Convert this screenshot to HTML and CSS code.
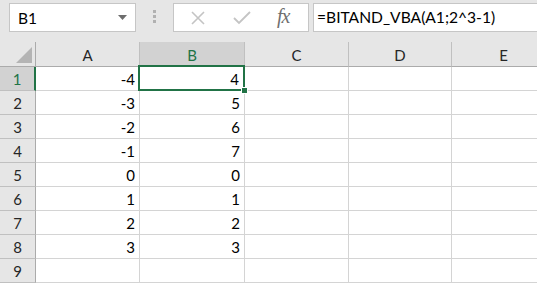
FILE: index.html
```html
<!DOCTYPE html>
<html lang="en">
<head>
    <meta charset="UTF-8">
    <meta name="viewport" content="width=device-width, initial-scale=1.0">
    <title>BITAND_VBA</title>
    <link rel="stylesheet" href="styles.css">
</head>
<body>
    <div class="toolbar">
        <div class="name-box">
            <span>B1</span>
            <svg class="drop" width="9" height="5" viewBox="0 0 9 5"><path d="M0 0h9L4.5 5z" fill="#6d6d6d"/></svg>
        </div>
        <div class="grip"><i></i><i></i><i></i></div>
        <div class="buttons">
            <svg width="14" height="14" viewBox="0 0 14 14"><path d="M1 1l12 12M13 1L1 13" stroke="#c4c4c4" stroke-width="1.6" fill="none"/></svg>
            <svg width="18" height="14" viewBox="0 0 18 14"><path d="M1 7l5 5L17 1" stroke="#c4c4c4" stroke-width="1.8" fill="none"/></svg>
            <span class="fx">fx</span>
        </div>
        <div class="formula">=BITAND_VBA(A1;2^3-1)</div>
    </div>

    <div class="sheet">
        <div class="corner"><span></span></div>
        <div class="col">A</div>
        <div class="col sel">B</div>
        <div class="col">C</div>
        <div class="col">D</div>
        <div class="col">E</div>

        <div class="row sel">1</div><div class="cell">-4</div><div class="cell active">4</div><div class="cell"></div><div class="cell"></div><div class="cell"></div>
        <div class="row">2</div><div class="cell">-3</div><div class="cell">5</div><div class="cell"></div><div class="cell"></div><div class="cell"></div>
        <div class="row">3</div><div class="cell">-2</div><div class="cell">6</div><div class="cell"></div><div class="cell"></div><div class="cell"></div>
        <div class="row">4</div><div class="cell">-1</div><div class="cell">7</div><div class="cell"></div><div class="cell"></div><div class="cell"></div>
        <div class="row">5</div><div class="cell">0</div><div class="cell">0</div><div class="cell"></div><div class="cell"></div><div class="cell"></div>
        <div class="row">6</div><div class="cell">1</div><div class="cell">1</div><div class="cell"></div><div class="cell"></div><div class="cell"></div>
        <div class="row">7</div><div class="cell">2</div><div class="cell">2</div><div class="cell"></div><div class="cell"></div><div class="cell"></div>
        <div class="row">8</div><div class="cell">3</div><div class="cell">3</div><div class="cell"></div><div class="cell"></div><div class="cell"></div>
        <div class="row">9</div><div class="cell"></div><div class="cell"></div><div class="cell"></div><div class="cell"></div><div class="cell"></div>
    </div>
</body>
</html>
```

FILE: styles.css
```css
* {
    box-sizing: border-box;
}

body {
    margin: 0;
    width: 537px;
    height: 286px;
    overflow: hidden;
    background-color: #ffffff;
    font-family: 'Lato', 'Liberation Sans', sans-serif;
    font-size: 15px;
    color: #000;
}

.toolbar {
    display: flex;
    align-items: flex-start;
    height: 42px;
    padding: 3px 0 0 9px;
    background-color: #e6e6e6;
}

.name-box {
    display: flex;
    align-items: center;
    justify-content: space-between;
    width: 127px;
    height: 29px;
    padding: 0 8px 0 8px;
    background-color: #fff;
    border: 1px solid #c6c6c6;
    font-size: 15.5px;
}

.grip {
    display: flex;
    flex-direction: column;
    gap: 2px;
    margin: 7px 17px 0 17px;
}

.grip i {
    width: 3px;
    height: 3px;
    background-color: #b1b1b1;
}

.buttons {
    display: flex;
    align-items: center;
    width: 136px;
    height: 29px;
    background-color: #fff;
    border: 1px solid #c6c6c6;
    padding-left: 17px;
}

.buttons svg:first-child {
    margin-right: 28px;
}

.buttons svg:nth-child(2) {
    margin-right: 26px;
}

.fx {
    font-family: 'Liberation Serif', serif;
    font-style: italic;
    font-size: 20px;
    color: #707070;
    letter-spacing: -1px;
    margin-top: -2px;
}

.formula {
    flex: 1;
    height: 29px;
    margin-left: 4px;
    padding: 4px 0 0 3px;
    background-color: #fff;
    border: 1px solid #c6c6c6;
    border-right: none;
    font-size: 15.6px;
}

.sheet {
    display: grid;
    grid-template-columns: 36px 104px 105px 104px 103px 104px;
    grid-template-rows: 25px repeat(9, 24px);
}

.corner {
    position: relative;
    background-color: #e6e6e6;
    border-right: 1px solid #ababab;
    border-bottom: 1px solid #ababab;
}

.corner span {
    position: absolute;
    right: 3px;
    bottom: 3px;
    width: 0;
    height: 0;
    border-left: 16px solid transparent;
    border-bottom: 16px solid #b4b4b4;
}

.col {
    display: flex;
    align-items: center;
    justify-content: center;
    padding-top: 2px;
    background-color: #e6e6e6;
    border-right: 1px solid #c0c0c0;
    border-bottom: 1px solid #ababab;
    color: #262626;
}

.col.sel {
    background-color: #d2d2d2;
    color: #217346;
    border-bottom: 2px solid #217346;
}

.row {
    display: flex;
    align-items: center;
    justify-content: center;
    background-color: #e6e6e6;
    border-right: 1px solid #ababab;
    border-bottom: 1px solid #c0c0c0;
    color: #262626;
}

.row.sel {
    background-color: #d2d2d2;
    color: #217346;
    border-right: 2px solid #217346;
}

.cell {
    display: flex;
    align-items: center;
    justify-content: flex-end;
    padding-right: 4px;
    border-right: 1px solid #d4d4d4;
    border-bottom: 1px solid #d4d4d4;
}

.cell.active {
    position: relative;
    padding-right: 5px;
}

.cell.active::before {
    content: "";
    position: absolute;
    left: -2px;
    top: -2px;
    right: -1px;
    bottom: -1px;
    border: 2px solid #217346;
}

.cell.active::after {
    content: "";
    position: absolute;
    right: -4px;
    bottom: -4px;
    width: 5px;
    height: 5px;
    background-color: #217346;
    border: 1px solid #fff;
    box-sizing: content-box;
}
```
